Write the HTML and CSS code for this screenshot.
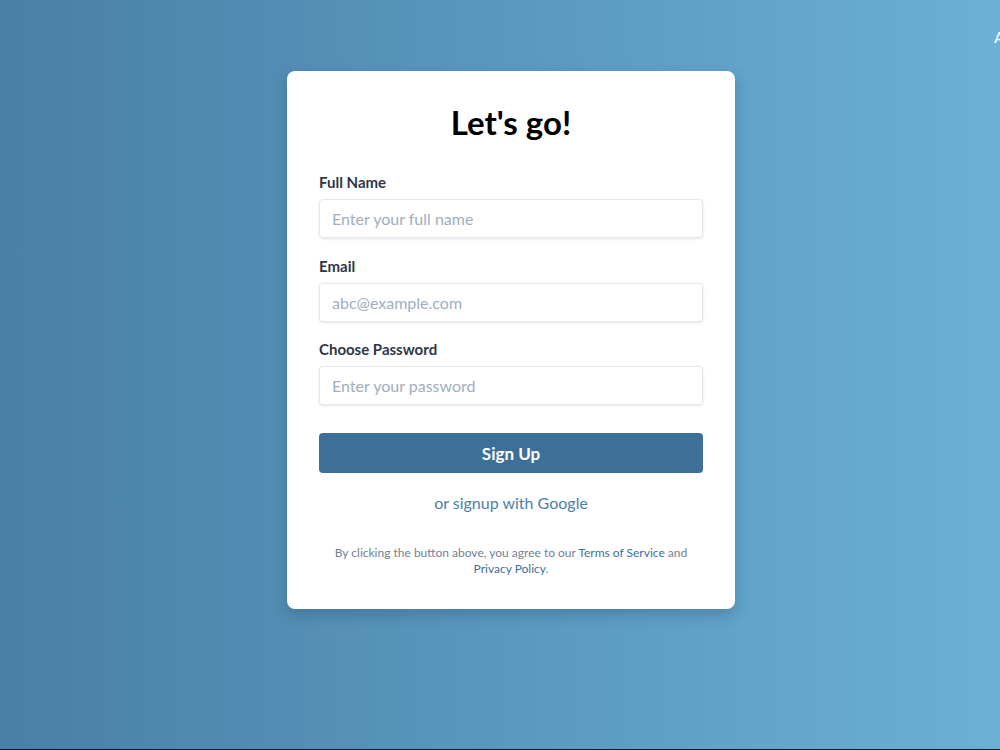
FILE: index.html
```html
<!DOCTYPE html>
<html lang="en">
<head>
<meta charset="utf-8">
<title>Sign Up</title>
<link rel="stylesheet" href="styles.css">
</head>
<body>
<div class="page">
  <a class="nav-link" href="#">About</a>
  <main class="card">
    <h1 class="title">Let's go!</h1>
    <form class="form">
      <div class="field">
        <label class="label" for="name">Full Name</label>
        <input class="input" id="name" type="text" placeholder="Enter your full name">
      </div>
      <div class="field">
        <label class="label" for="email">Email</label>
        <input class="input" id="email" type="email" placeholder="abc@example.com">
      </div>
      <div class="field">
        <label class="label" for="pw">Choose Password</label>
        <input class="input" id="pw" type="password" placeholder="Enter your password">
      </div>
      <button class="btn" type="button">Sign Up</button>
    </form>
    <p class="alt"><a href="#">or signup with Google</a></p>
    <p class="legal">By clicking the button above, you agree to our <a href="#">Terms of Service</a> and <a href="#">Privacy Policy</a>.</p>
  </main>
</div>
</body>
</html>
```

FILE: styles.css
```css
html {
  background: #0f1c2b;
}
body {
  margin: 0;
  overflow: hidden;
  font-family: Lato, "Open Sans", sans-serif;
}
.page {
  position: relative;
  height: 749px;
  background: linear-gradient(to right, #4a7fa7, #6bb0d5);
  display: flex;
  justify-content: center;
  align-items: flex-start;
  padding: 71px 0 0 22px;
  box-sizing: border-box;
}
.nav-link {
  position: absolute;
  left: 994px;
  top: 27px;
  color: #fff;
  font-size: 16px;
  text-decoration: none;
}
.card {
  width: 448px;
  box-sizing: border-box;
  background: #fff;
  border-radius: 8px;
  padding: 32px;
  box-shadow: 0 6px 14px rgba(20, 50, 80, 0.25);
}
.title {
  margin: 0 0 31px;
  text-align: center;
  font-size: 33px;
  line-height: 38px;
  font-weight: 700;
  color: #000;
}
.form {
  display: flex;
  flex-direction: column;
}
.field {
  display: flex;
  flex-direction: column;
  margin-bottom: 17.5px;
}
.label {
  font-size: 15px;
  line-height: 20px;
  font-weight: 700;
  color: #2d3748;
  margin-bottom: 7px;
}
.input {
  height: 39px;
  box-sizing: border-box;
  border: 1px solid #e2e8f0;
  border-radius: 4px;
  padding: 0 12px;
  font-family: inherit;
  font-size: 16px;
  color: #2d3748;
  box-shadow: 0 1px 3px rgba(0, 0, 0, 0.1);
}
.input::placeholder {
  color: #a0aec0;
}
.btn {
  margin-top: 10.5px;
  height: 40px;
  border: 0;
  border-radius: 4px;
  background: #3c7096;
  color: #fff;
  font-family: inherit;
  font-size: 17px;
  font-weight: 700;
}
.alt {
  margin: 18px 0 0;
  text-align: center;
  font-size: 16px;
  line-height: 24px;
}
.alt a {
  color: #4a7fa7;
  text-decoration: none;
}
.legal {
  margin: 30px 0 0;
  text-align: center;
  font-size: 12px;
  line-height: 16px;
  color: #718096;
}
.legal a {
  color: #3c7096;
  text-decoration: none;
}
```
